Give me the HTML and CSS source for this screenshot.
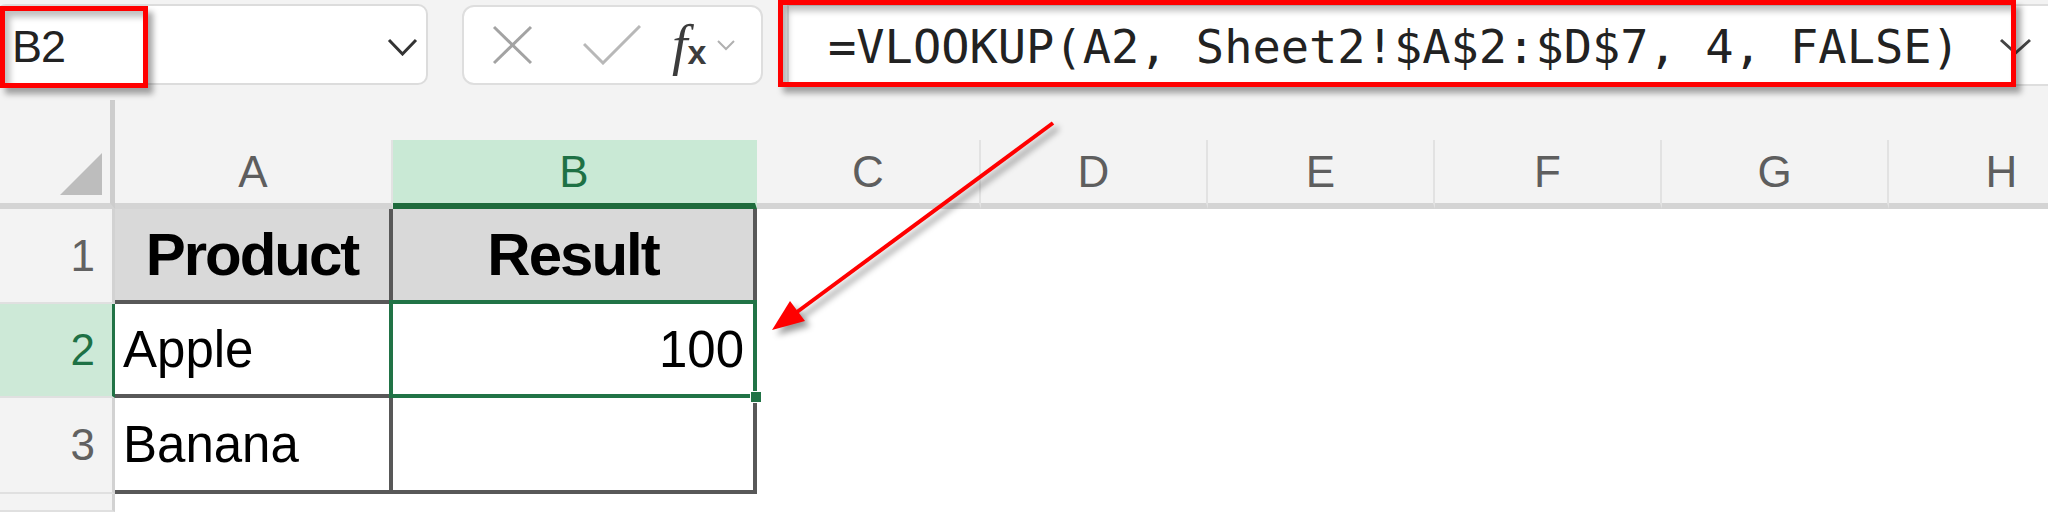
FILE: index.html
```html
<!DOCTYPE html>
<html lang="en">
<head>
  <meta charset="UTF-8" />
  <meta name="viewport" content="width=device-width, initial-scale=1.0" />
  <title>VLOOKUP example</title>
  <link rel="stylesheet" href="styles.css">
</head>
<body>
  <div class="toolbar">
    <div class="name-box">
      <span class="cell-ref">B2</span>
      <svg class="chevron" width="31" height="18" viewBox="0 0 31 18"><polyline points="2,2 15.5,16 29,2" /></svg>
      <div class="mark mark-name"></div>
    </div>

    <div class="fx-box">
      <svg class="icon-cancel" width="41" height="40" viewBox="0 0 41 40"><line x1="2" y1="2" x2="39" y2="38" /><line x1="39" y1="2" x2="2" y2="38" /></svg>
      <svg class="icon-enter" width="58" height="40" viewBox="0 0 58 40"><polyline points="1,19 20,38 57,1" /></svg>
      <span class="fx"><i>f</i><b>x</b></span>
      <svg class="chevron-sm" width="20" height="12" viewBox="0 0 20 12"><polyline points="2,2 10,10 18,2" /></svg>
    </div>

    <div class="formula">
      <span class="formula-text">=VLOOKUP(A2, Sheet2!$A$2:$D$7, 4, FALSE)</span>
      <svg class="chevron" width="33" height="17" viewBox="0 0 33 17"><polyline points="2,2 16.5,15 31,2" /></svg>
      <div class="mark mark-formula"></div>
    </div>
  </div>

  <div class="sheet">
    <div class="corner"><div class="select-all"></div></div>
    <div class="col">A</div>
    <div class="col sel">B</div>
    <div class="col">C</div>
    <div class="col">D</div>
    <div class="col">E</div>
    <div class="col">F</div>
    <div class="col">G</div>
    <div class="col">H</div>

    <div class="rh">1</div>
    <div class="cell head">Product</div>
    <div class="cell head">Result</div>
    <div class="rest"></div>

    <div class="rh sel">2</div>
    <div class="cell">Apple</div>
    <div class="cell num active">100<span class="handle"></span></div>
    <div class="rest"></div>

    <div class="rh">3</div>
    <div class="cell">Banana</div>
    <div class="cell"></div>
    <div class="rest"></div>

    <div class="rh"></div>
    <div class="rest wide"></div>
  </div>

  <svg class="arrow" width="2048" height="512" viewBox="0 0 2048 512">
    <line x1="1053" y1="123" x2="797" y2="312" />
    <polygon points="772,330 790,301 805,321" />
  </svg>
</body>
</html>
```

FILE: styles.css
```css
* {
  margin: 0;
  padding: 0;
  box-sizing: border-box;
}

body {
  position: relative;
  width: 2048px;
  height: 512px;
  overflow: hidden;
  background: #f3f3f3;
  color: #000;
  font-family: "Liberation Sans", Arial, sans-serif;
}

/* top bar */

.toolbar {
  display: flex;
  align-items: flex-start;
  height: 90px;
  padding-top: 4px;
}

.name-box {
  position: relative;
  display: flex;
  align-items: center;
  width: 432px;
  height: 81px;
  margin-left: -4px;
  padding: 4px 8px 0 14px;
  background: #fff;
  border: 2px solid #dcdcdc;
  border-radius: 10px;
}

.cell-ref {
  font-size: 45px;
  letter-spacing: -1px;
  color: #222;
}

.chevron {
  margin-left: auto;
  fill: none;
  stroke: #333;
  stroke-width: 3;
}

.fx-box {
  display: flex;
  align-items: center;
  width: 301px;
  height: 80px;
  margin: 1px 0 0 34px;
  padding-left: 28px;
  background: #fff;
  border: 2px solid #dedede;
  border-radius: 12px;
}

.icon-cancel {
  stroke: #a3a3a3;
  stroke-width: 3;
}

.icon-enter {
  margin-left: 50px;
  fill: none;
  stroke: #b8b8b8;
  stroke-width: 3;
}

.fx {
  display: flex;
  align-items: baseline;
  margin-left: 31px;
  color: #3c3c3c;
  white-space: nowrap;
}

.fx i {
  font-family: "Liberation Serif", serif;
  font-size: 56px;
}

.fx b {
  font-size: 34px;
}

.chevron-sm {
  margin-left: 10px;
  fill: none;
  stroke: #b0b0b0;
  stroke-width: 2;
}

.formula {
  position: relative;
  display: flex;
  align-items: center;
  flex: 1;
  height: 82px;
  margin-left: 24px;
  padding: 2px 16px 0 39px;
  background: #fff;
  border: 2px solid #dedede;
  border-right: none;
}

.formula-text {
  font-family: "DejaVu Sans Mono", "Liberation Mono", monospace;
  font-size: 47px;
  color: #222;
  white-space: pre;
}

.formula .chevron {
  stroke: #444;
}

/* red call-outs */

.mark {
  position: absolute;
  border: 5px solid #f00;
  box-shadow: 5px 6px 6px rgba(0, 0, 0, 0.35), inset 5px 6px 6px rgba(0, 0, 0, 0.25);
  z-index: 5;
}

.mark-name {
  left: 2px;
  top: 0;
  width: 148px;
  height: 82px;
}

.mark-formula {
  left: -11px;
  top: -6px;
  width: 1238px;
  height: 87px;
}

/* sheet grid */

.sheet {
  display: grid;
  grid-template-columns: 115px 278px 364px 224px repeat(5, 227px);
  grid-template-rows: 119px 95px 94px 96px 18px;
}

.corner {
  align-self: end;
  display: flex;
  align-items: flex-end;
  justify-content: flex-end;
  height: 109px;
  padding: 0 8px 8px 0;
  border-right: 5px solid #cdcdcd;
  border-bottom: 6px solid #d4d4d4;
}

.select-all {
  width: 42px;
  height: 42px;
  background: #bdbdbd;
  clip-path: polygon(100% 0, 100% 100%, 0 100%);
}

.col {
  align-self: end;
  display: flex;
  align-items: center;
  justify-content: center;
  height: 69px;
  border-right: 2px solid #e2e2e2;
  border-bottom: 6px solid #d4d4d4;
  font-size: 44px;
  color: #5e5e5e;
}

.col.sel {
  background: #c9e9d5;
  border-right-color: #c9e9d5;
  border-bottom-color: #1e6b3c;
  color: #1e7145;
}

.rh {
  display: flex;
  align-items: center;
  justify-content: flex-end;
  padding-right: 17px;
  background: #f3f3f3;
  border-right: 3px solid #d2d2d2;
  border-bottom: 2px solid #e0e0e0;
  font-size: 44px;
  color: #616161;
}

.rh.sel {
  background: #cde9d7;
  border-right-color: #217346;
  color: #1e7145;
}

.cell {
  display: flex;
  align-items: center;
  padding: 0 8px;
  background: #fff;
  border-right: 4px solid #585858;
  border-bottom: 4px solid #585858;
  font-size: 51px;
}

.cell.head {
  justify-content: center;
  background: #d9d9d9;
  font-weight: bold;
  font-size: 60px;
  letter-spacing: -2px;
}

.cell.num {
  justify-content: flex-end;
  padding-right: 9px;
}

.cell.active {
  position: relative;
}

.cell.active::after {
  content: "";
  position: absolute;
  top: -4px;
  left: -4px;
  right: -4px;
  bottom: -4px;
  border: 4px solid #217346;
  z-index: 2;
}

.handle {
  position: absolute;
  right: -9px;
  bottom: -9px;
  width: 12px;
  height: 12px;
  background: #217346;
  border: 1px solid #fff;
  z-index: 3;
}

.rest {
  grid-column: 4 / -1;
  background: #fff;
}

.rest.wide {
  grid-column: 2 / -1;
}

.arrow {
  position: absolute;
  left: 0;
  top: 0;
  z-index: 6;
  filter: drop-shadow(5px 5px 3px rgba(0, 0, 0, 0.4));
}

.arrow line {
  stroke: #f00;
  stroke-width: 4;
}

.arrow polygon {
  fill: #f00;
}
```
